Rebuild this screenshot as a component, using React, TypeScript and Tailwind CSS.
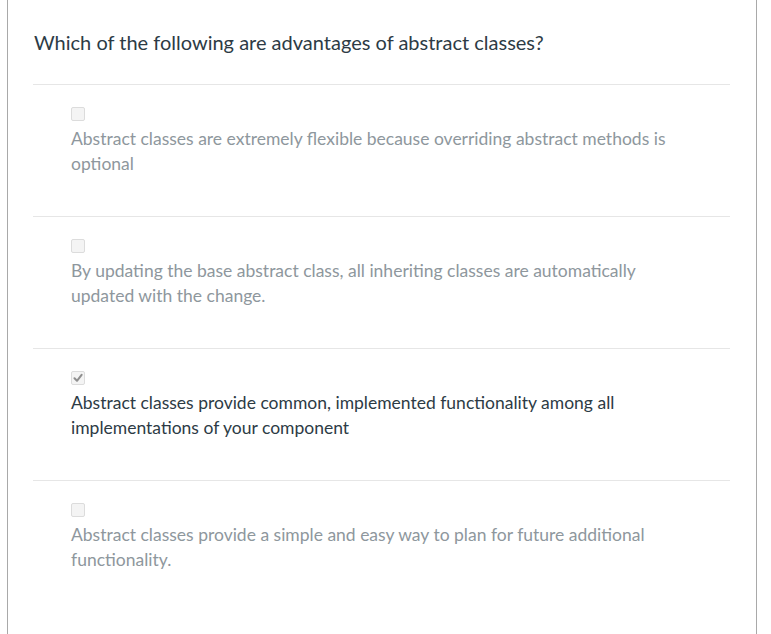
import React from 'react'

const answers = [
  { text: 'Abstract classes are extremely flexible because overriding abstract methods is optional', checked: false },
  { text: 'By updating the base abstract class, all inheriting classes are automatically updated with the change.', checked: false },
  { text: 'Abstract classes provide common, implemented functionality among all implementations of your component', checked: true },
  { text: 'Abstract classes provide a simple and easy way to plan for future additional functionality.', checked: false },
]

function Box({ checked }: { checked: boolean }) {
  return (
    <div className="w-[14px] h-[14px] rounded-[2px] border border-[#dcdcdc] bg-[#f4f4f4] flex items-center justify-center">
      {checked && (
        <svg width="10" height="10" viewBox="0 0 10 10">
          <path d="M1.5 5.2 L4 7.8 L8.6 1.8" fill="none" stroke="#8f8f8f" strokeWidth="2" strokeLinecap="round" strokeLinejoin="round" />
        </svg>
      )}
    </div>
  )
}

export default function App() {
  return (
    <div className="w-[771px] h-[634px] bg-white overflow-hidden" style={{ fontFamily: 'Lato, "Open Sans", sans-serif' }}>
      <div className="ml-[7px] w-[750px] h-full border-x border-[#a9a9a9] pt-[28px]">
        <h1 className="pl-[26px] text-[20px] leading-[28px] text-[#2d3b45]">Which of the following are advantages of abstract classes?</h1>
        <div className="ml-[25px] mr-[26px] mt-[28px]">
          {answers.map((a, i) => (
            <div key={i} className="border-t border-[#e6e6e6] pt-[22px] pb-[40px] pl-[38px] pr-[40px]">
              <Box checked={a.checked} />
              <p className={`mt-[5px] text-[17.5px] leading-[25px] ${a.checked ? 'text-[#2d3b45]' : 'text-[#8e979d]'}`}>{a.text}</p>
            </div>
          ))}
        </div>
      </div>
    </div>
  )
}
